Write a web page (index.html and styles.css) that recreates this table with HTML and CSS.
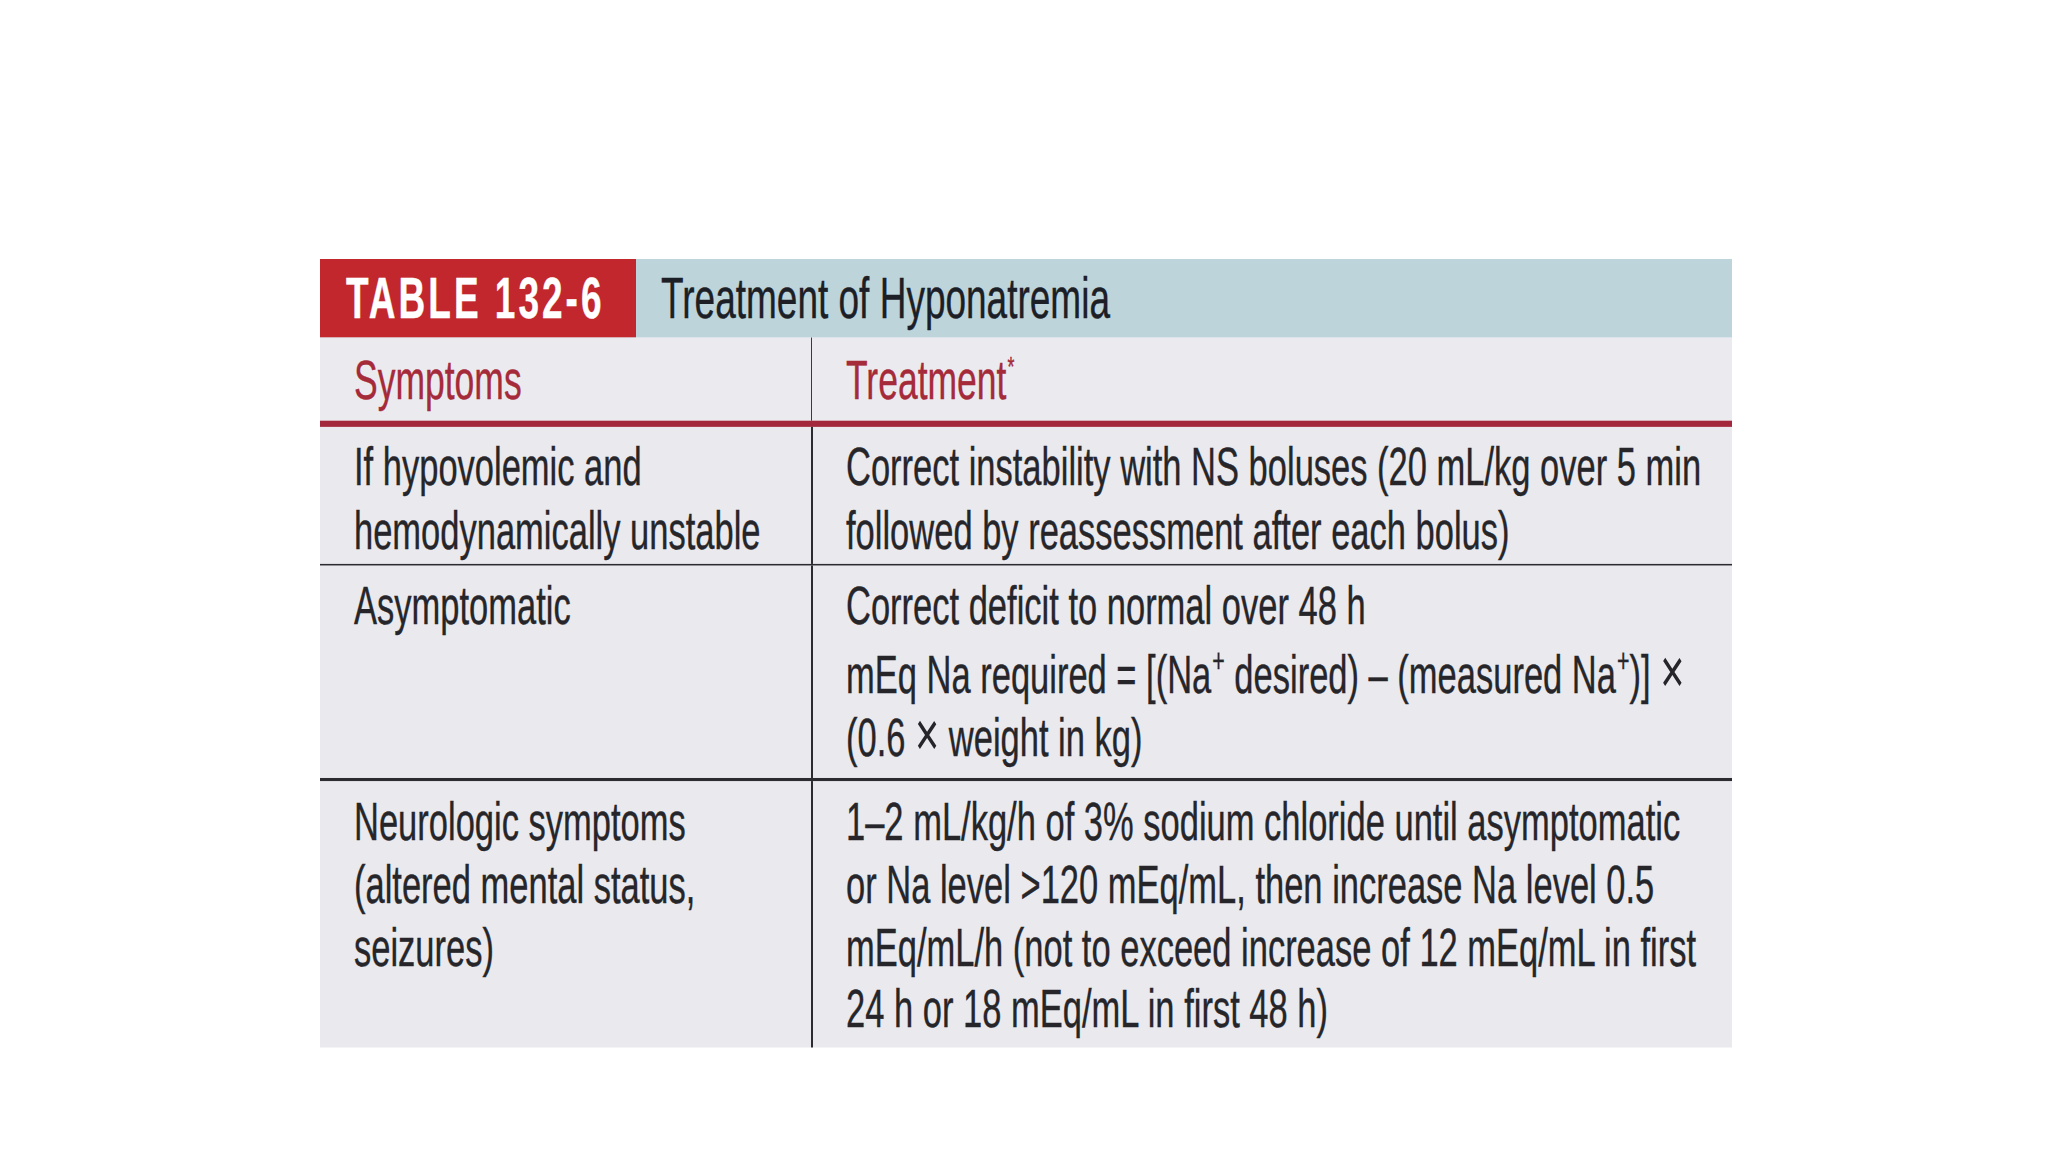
FILE: index.html
```html
<!DOCTYPE html>
<html lang="en">
<head>
<meta charset="utf-8">
<title>Treatment of Hyponatremia</title>
<link rel="stylesheet" href="styles.css">
</head>
<body>
<div class="page">
  <div class="table">
    <div class="title">
      <div class="title-num">TABLE 132-6</div>
      <div class="title-name">Treatment of Hyponatremia</div>
    </div>
    <div class="row head">
      <div class="cell left">Symptoms</div>
      <div class="cell right">Treatment<sup class="star">*</sup></div>
    </div>
    <div class="row row-a">
      <div class="cell left">If hypovolemic and<br>hemodynamically unstable</div>
      <div class="cell right">Correct instability with NS boluses (20 mL/kg over 5 min<br>followed by reassessment after each bolus)</div>
    </div>
    <div class="row row-b">
      <div class="cell left">Asymptomatic</div>
      <div class="cell right">
        <p>Correct deficit to normal over 48 h</p>
        <p>mEq Na required = [(Na<sup>+</sup> desired) – (measured Na<sup>+</sup>)] <span class="times">×</span><br>(0.6 <span class="times">×</span> weight in kg)</p>
      </div>
    </div>
    <div class="row row-c">
      <div class="cell left">Neurologic symptoms<br>(altered mental status,<br>seizures)</div>
      <div class="cell right">1–2 mL/kg/h of 3% sodium chloride until asymptomatic<br>or Na level &gt;120 mEq/mL, then increase Na level 0.5<br>mEq/mL/h (not to exceed increase of 12 mEq/mL in first<br>24 h or 18 mEq/mL in first 48 h)</div>
    </div>
  </div>
</div>
</body>
</html>
```

FILE: styles.css
```css
html, body {
  margin: 0;
  padding: 0;
  background: #ffffff;
}

body {
  min-height: 1152px;
}

.page {
  box-sizing: border-box;
  min-height: 1152px;
  padding: 259px 0 0 320px;
}

.table {
  width: 1412px;
  transform: scaleY(1.54);
  transform-origin: top left;
  font-family: "Liberation Sans", Arial, sans-serif;
  color: #26262a;
  background: #e9e9ee;
  -webkit-text-stroke: 0.25px currentColor;
}

.title {
  display: flex;
  height: 51.3px;
  background: #bdd4da;
}

.title-num {
  width: 316px;
  box-sizing: border-box;
  padding: 2.4px 0 0 26px;
  line-height: 48.9px;
  background: #c1272d;
  color: #ffffff;
  font-weight: bold;
  font-size: 37px;
  letter-spacing: 3px;
  white-space: nowrap;
}

.title-name {
  padding: 2.4px 0 0 25px;
  line-height: 48.9px;
  font-size: 37px;
  color: #1c2026;
  white-space: nowrap;
}

.row {
  position: relative;
  display: flex;
}

.row-a::after,
.row-b::after {
  content: "";
  position: absolute;
  left: 0;
  right: 0;
  bottom: -1.3px;
  height: 1.3px;
  background: #2c2c30;
}

.row-b,
.row-c {
  margin-top: 1.3px;
}

.cell {
  box-sizing: border-box;
  font-size: 34.5px;
  line-height: 40.9px;
  white-space: nowrap;
  padding-top: 6.1px;
}

.cell.left {
  width: 491px;
  padding-left: 34px;
}

.cell.right {
  flex: 1;
  padding-left: 33px;
  border-left: 2px solid #2c2c30;
}

.cell p {
  margin: 0;
}

.cell p + p {
  margin-top: 4.5px;
}

.head {
  background: #ebebef;
  border-bottom: 4px solid #a3283b;
}

.head .cell {
  color: #a52a3a;
  font-size: 35.5px;
  padding-top: 7.6px;
  padding-bottom: 5.4px;
}

.head .cell.right {
  border-left: 1px solid #4a3236;
  padding-left: 34px;
}

.row-a .cell {
  padding-bottom: 0.6px;
}

.row-b .cell {
  padding-bottom: 5px;
}

.row-c .cell {
  padding-bottom: 3.7px;
}

.times {
  font-size: 1.2em;
  line-height: 0;
  -webkit-text-stroke: 0;
}

sup {
  font-size: 0.62em;
  line-height: 0;
  vertical-align: 0.7em;
  margin-left: 1px;
}

sup.star {
  font-size: 0.5em;
  vertical-align: 0.85em;
}
```
